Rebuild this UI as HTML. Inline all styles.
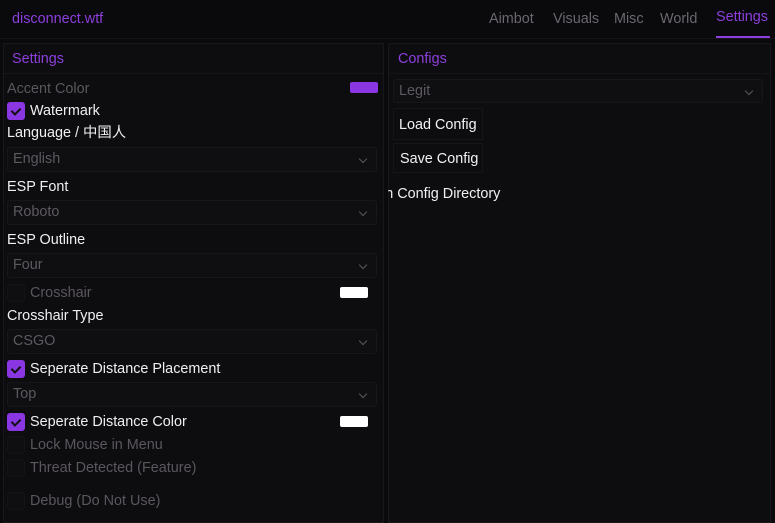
<!DOCTYPE html>
<html><head><meta charset="utf-8"><style>
*{margin:0;padding:0;box-sizing:border-box}
body{width:775px;height:518px;background:#0a090c;overflow:hidden;position:relative;font-family:"Liberation Sans","Noto Sans CJK SC",sans-serif;font-size:14.4px;color:#f2f2f2}
.a{position:absolute;white-space:nowrap;line-height:18px}
.p{color:#8c3fdc}
.g{color:#5a575e}
.w{color:#f0f0f0}
.panel{position:absolute;background:#0d0c0f;border:1px solid #19171c}
.dd{position:absolute;border:1px solid #18161b;background:#0f0e11;border-radius:3px;color:#5c5960;padding-left:5px;line-height:23px}
.dd:after{content:"";position:absolute;right:10px;top:8px;width:5px;height:5px;border-right:1px solid #5a575e;border-bottom:1px solid #5a575e;transform:rotate(45deg)}
.cb{position:absolute;width:18px;height:18px;border-radius:3px;background:#0f0e11;border:1px solid #151318}
.cb.on{background:#8b36e3;border-color:#8b36e3}
.cb.on:after{content:"";position:absolute;left:5px;top:3px;width:4px;height:7px;border-right:2px solid #111;border-bottom:2px solid #111;transform:rotate(45deg)}
.sw{position:absolute;width:28px;height:11px;border-radius:2px;background:#fff}
.btn{position:absolute;border:1px solid #17151a;background:#0d0c0f;line-height:28px;padding-left:5px;overflow:hidden}
</style></head><body>
<div class="a p" style="left:12px;top:10px">disconnect.wtf</div>
<div style="position:absolute;left:0;top:38px;width:775px;height:1px;background:#16141a"></div>
<div class="a g" style="left:489px;top:10px;color:#6a676e">Aimbot</div>
<div class="a g" style="left:553px;top:10px;color:#6a676e">Visuals</div>
<div class="a g" style="left:614px;top:10px;color:#6a676e">Misc</div>
<div class="a g" style="left:660px;top:10px;color:#6a676e">World</div>
<div class="a p" style="left:716px;top:8px">Settings</div>
<div style="position:absolute;left:716px;top:36px;width:54px;height:2px;background:#8c3fdc"></div>

<div class="panel" style="left:3px;top:43px;width:381px;height:480px"></div>
<div style="position:absolute;left:4px;top:73px;width:379px;height:1px;background:#17151a"></div>
<div class="a p" style="left:12px;top:50px">Settings</div>
<div class="a g" style="left:7px;top:80px">Accent Color</div>
<div class="sw" style="left:350px;top:82px;background:#8b36e3"></div>
<div class="cb on" style="left:7px;top:102px"></div><div class="a w" style="left:30px;top:102px">Watermark</div>
<div class="a w" style="left:7px;top:124px">Language / 中国人</div>
<div class="dd" style="left:7px;top:147px;width:370px;height:25px">English</div>
<div class="a w" style="left:7px;top:178px">ESP Font</div>
<div class="dd" style="left:7px;top:200px;width:370px;height:25px">Roboto</div>
<div class="a w" style="left:7px;top:231px">ESP Outline</div>
<div class="dd" style="left:7px;top:253px;width:370px;height:25px">Four</div>
<div class="cb" style="left:7px;top:284px"></div><div class="a g" style="left:30px;top:284px">Crosshair</div>
<div class="sw" style="left:340px;top:287px"></div>
<div class="a w" style="left:7px;top:307px">Crosshair Type</div>
<div class="dd" style="left:7px;top:329px;width:370px;height:25px">CSGO</div>
<div class="cb on" style="left:7px;top:360px"></div><div class="a w" style="left:30px;top:360px">Seperate Distance Placement</div>
<div class="dd" style="left:7px;top:382px;width:370px;height:25px">Top</div>
<div class="cb on" style="left:7px;top:413px"></div><div class="a w" style="left:30px;top:413px">Seperate Distance Color</div>
<div class="sw" style="left:340px;top:416px"></div>
<div class="cb" style="left:7px;top:436px"></div><div class="a g" style="left:30px;top:436px">Lock Mouse in Menu</div>
<div class="cb" style="left:7px;top:459px"></div><div class="a g" style="left:30px;top:459px">Threat Detected (Feature)</div>
<div class="cb" style="left:7px;top:492px"></div><div class="a g" style="left:30px;top:492px">Debug (Do Not Use)</div>

<div class="panel" style="left:388px;top:43px;width:383px;height:480px"></div>
<div style="position:absolute;left:389px;top:73px;width:381px;height:1px;background:#17151a"></div>
<div class="a p" style="left:398px;top:50px">Configs</div>
<div class="dd" style="left:393px;top:79px;width:370px;height:24px">Legit</div>
<div class="btn" style="left:393px;top:108px;width:90px;height:32px;line-height:32px">Load Config</div>
<div class="btn" style="left:393px;top:143px;width:90px;height:30px;line-height:30px;padding-left:6px">Save Config</div>
<div style="position:absolute;left:388px;top:178px;width:150px;height:30px;overflow:hidden"><div class="a w" style="left:-30px;top:7px">Open Config Directory</div></div>
</body></html>
